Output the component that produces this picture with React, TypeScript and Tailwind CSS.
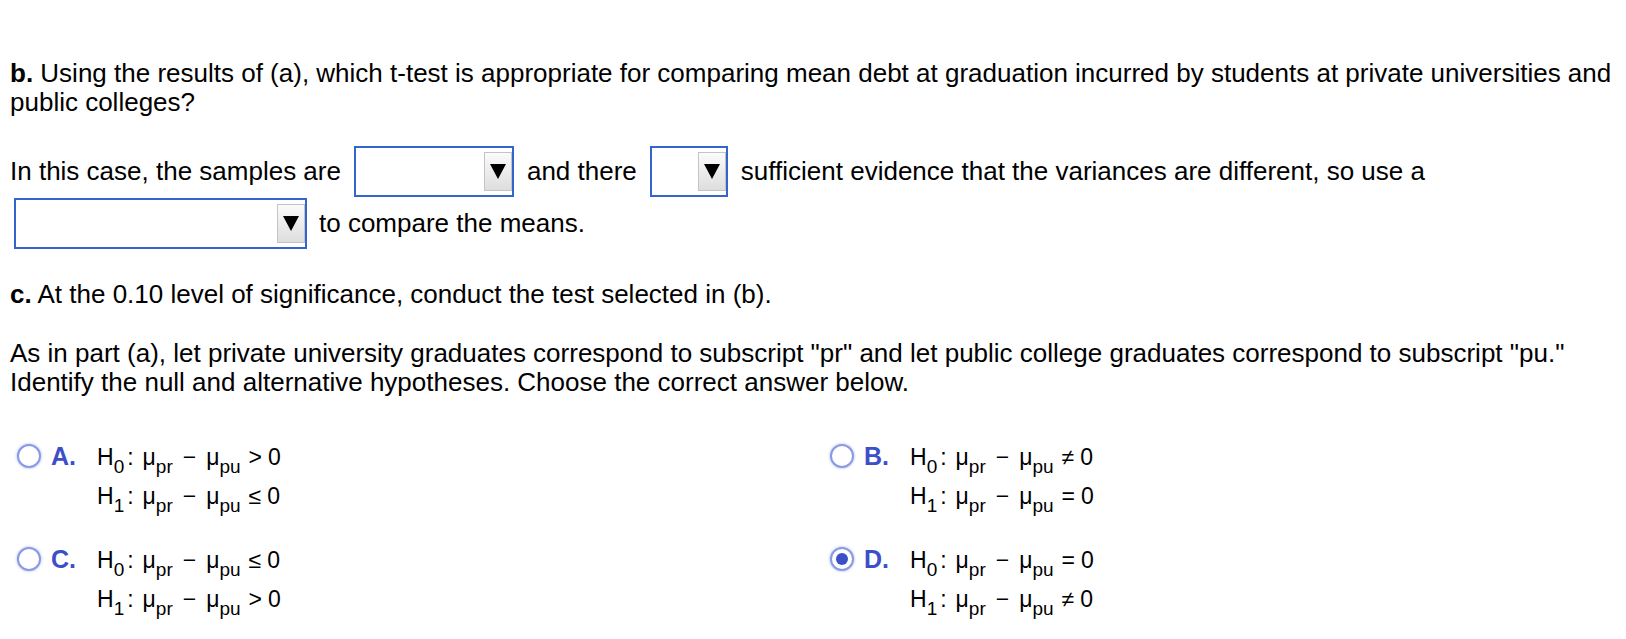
import React from "react";

function Dropdown({ width }: { width: string }) {
  return (
    <div
      className={`${width} h-[51px] shrink-0 border-2 border-[#3366cc] bg-white flex items-center justify-end`}>
      <div className="w-[28px] h-[39px] border border-[#c4c4c4] bg-linear-to-b from-[#fbfbfb] to-[#dedede] flex items-center justify-center">
        <svg width="16" height="16" viewBox="0 0 16 16">
          <polygon points="0,1 16,1 8,16" fill="#000" />
        </svg>
      </div>
    </div>
  );
}

function Radio({ checked }: { checked?: boolean }) {
  return (
    <div className="self-center w-[24px] h-[24px] shrink-0 rounded-full border-2 border-[#8a9ae4] shadow-[0_0_3px_#aab5ee] bg-white flex items-center justify-center">
      {checked && <div className="w-[12px] h-[12px] rounded-full bg-[#3a4fc8]" />}
    </div>
  );
}

function Sub({ children }: { children: React.ReactNode }) {
  return <span className="relative top-[8px] text-[19px]">{children}</span>;
}

function Hyp({ n, rel }: { n: string; rel: string }) {
  return (
    <span className="whitespace-nowrap">
      H<Sub>{n}</Sub>
      <span className="ml-[3px]">:</span>
      <span className="ml-[9px]">μ</span>
      <Sub>pr</Sub>
      <span className="mx-[10px]">−</span>μ<Sub>pu</Sub>
      <span className="ml-[8px]">{rel}</span>
      <span className="ml-[6px]">0</span>
    </span>
  );
}

function Option({
  letter,
  h0,
  h1,
  checked,
}: {
  letter: string;
  h0: string;
  h1: string;
  checked?: boolean;
}) {
  return (
    <div className="flex flex-col text-[23px] leading-[40px]">
      <div className="flex items-baseline h-[40px]">
        <Radio checked={checked} />
        <span className="ml-[10px] w-[46px] font-bold text-[25px] text-[#3a4fc8]">
          {letter}.
        </span>
        <Hyp n="0" rel={h0} />
      </div>
      <div className="pl-[80px]">
        <Hyp n="1" rel={h1} />
      </div>
    </div>
  );
}

export default function App() {
  return (
    <div className="w-[1626px] h-[639px] bg-white text-black font-['Liberation_Sans',Arial,sans-serif] text-[26px] leading-[29px] pl-[10px] pt-[59px] overflow-hidden">
      <p className="w-[1612px]">
        <b>b.</b> Using the results of (a), which t-test is appropriate for comparing mean
        debt at graduation incurred by students at private universities and public
        colleges?
      </p>

      <div className="mt-[28px] flex items-center h-[52px] gap-[13px] whitespace-nowrap">
        <span>In this case, the samples are</span>
        <Dropdown width="w-[160px]" />
        <span>and there</span>
        <Dropdown width="w-[78px]" />
        <span>sufficient evidence that the variances are different, so use a</span>
      </div>
      <div className="flex items-center h-[52px] gap-[12px] pl-[4px] whitespace-nowrap">
        <Dropdown width="w-[293px]" />
        <span>to compare the means.</span>
      </div>

      <p className="mt-[31px]">
        <b>c.</b> At the 0.10 level of significance, conduct the test selected in (b).
      </p>

      <p className="mt-[30px]">
        As in part (a), let private university graduates correspond to subscript "pr" and
        let public college graduates correspond to subscript "pu."
        <br />
        Identify the null and alternative hypotheses. Choose the correct answer below.
      </p>

      <div className="mt-[39px] pl-[7px] grid grid-cols-[813px_1fr] gap-y-[21px]">
        <Option letter="A" h0=">" h1="≤" />
        <Option letter="B" h0="≠" h1="=" />
        <Option letter="C" h0="≤" h1=">" />
        <Option letter="D" h0="=" h1="≠" checked />
      </div>
    </div>
  );
}
